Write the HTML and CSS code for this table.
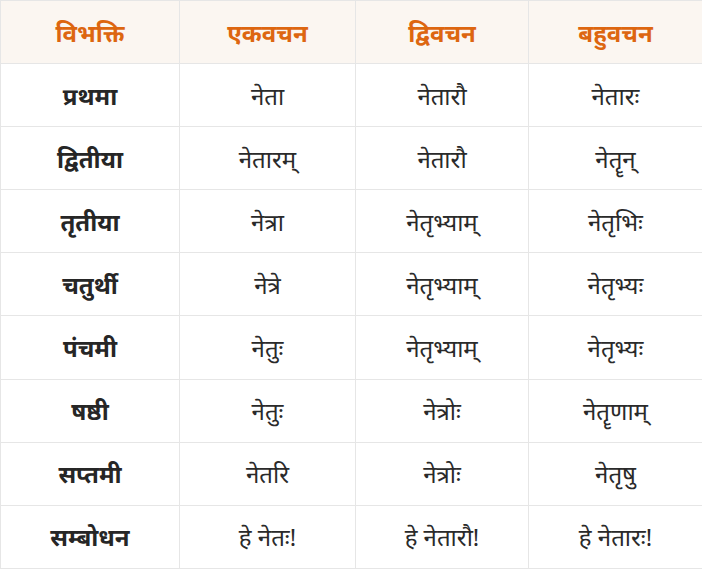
FILE: index.html
```html
<!DOCTYPE html>
<html lang="sa">
<head>
<meta charset="utf-8">
<link rel="stylesheet" href="styles.css">
</head>
<body>
<table class="forms">
  <colgroup>
    <col class="c1"><col class="c2"><col class="c3"><col class="c4">
  </colgroup>
  <thead>
    <tr><th>विभक्ति</th><th>एकवचन</th><th>द्विवचन</th><th>बहुवचन</th></tr>
  </thead>
  <tbody>
    <tr><td class="case">प्रथमा</td><td>नेता</td><td>नेतारौ</td><td>नेतारः</td></tr>
    <tr><td class="case">द्वितीया</td><td>नेतारम्</td><td>नेतारौ</td><td>नेतॄन्</td></tr>
    <tr><td class="case">तृतीया</td><td>नेत्रा</td><td>नेतृभ्याम्</td><td>नेतृभिः</td></tr>
    <tr><td class="case">चतुर्थी</td><td>नेत्रे</td><td>नेतृभ्याम्</td><td>नेतृभ्यः</td></tr>
    <tr><td class="case">पंचमी</td><td>नेतुः</td><td>नेतृभ्याम्</td><td>नेतृभ्यः</td></tr>
    <tr><td class="case">षष्ठी</td><td>नेतुः</td><td>नेत्रोः</td><td>नेतॄणाम्</td></tr>
    <tr><td class="case">सप्तमी</td><td>नेतरि</td><td>नेत्रोः</td><td>नेतृषु</td></tr>
    <tr><td class="case">सम्बोधन</td><td>हे नेतः!</td><td>हे नेतारौ!</td><td>हे नेतारः!</td></tr>
  </tbody>
</table>
</body>
</html>
```
FILE: styles.css
```css
html, body {
  margin: 0;
  padding: 0;
  background: #ffffff;
}
.forms {
  width: 702px;
  border-collapse: collapse;
  table-layout: fixed;
  font-family: "Noto Sans", "Noto Sans Devanagari", sans-serif;
  font-size: 24px;
  color: #2a2a2a;
}
.c1 { width: 179px; }
.c2 { width: 176px; }
.c3 { width: 173px; }
.c4 { width: 174px; }
.forms tr {
  height: 63.1px;
}
.forms th, .forms td {
  border: 1px solid #e6e6e6;
  text-align: center;
  vertical-align: middle;
  padding: 0;
}
.forms th {
  background: #fbf6f1;
  color: #dd6610;
  font-weight: 700;
}
.forms td.case {
  font-weight: 700;
  color: #262626;
}
```
